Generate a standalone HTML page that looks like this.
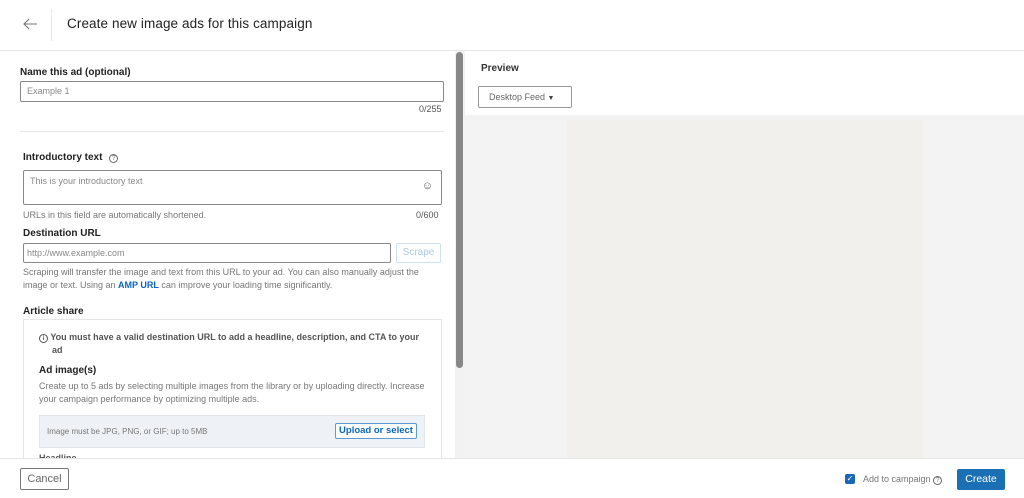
<!DOCTYPE html>
<html><head><style>
*{box-sizing:border-box;margin:0;padding:0}
body{width:1024px;height:498px;overflow:hidden;background:#fff;font-family:"Liberation Sans",sans-serif;color:#333;position:relative}
.hdr{position:absolute;left:0;top:0;width:1024px;height:51px;border-bottom:1px solid #e6e6e6;background:#fff}
.abs{position:absolute}
.lbl{font-size:10px;font-weight:bold;color:#222}
.inp{position:absolute;border:1px solid #888;border-radius:2px;background:#fff;font-size:9px;color:#888;padding-left:6px}
.sm{font-size:9px;color:#777}
</style></head><body>
<div class="hdr">
<svg class="abs" style="left:22px;top:17px" width="16" height="14" viewBox="0 0 16 14"><path d="M15 7H2M7 2L2 7l5 5" stroke="#777" stroke-width="1.1" fill="none"/></svg>
<div class="abs" style="left:51px;top:9px;width:1px;height:32px;background:#e6e6e6"></div>
<div class="abs" style="left:67px;top:16px;font-size:13.5px;color:#222;letter-spacing:0.1px">Create new image ads for this campaign</div>
</div>
<div class="abs lbl" style="left:20px;top:67px">Name this ad (optional)</div>
<div class="inp" style="left:20px;top:81px;width:424px;height:21px;line-height:19px">Example 1</div>
<div class="abs sm" style="left:419px;top:104px;color:#555">0/255</div>
<div class="abs" style="left:20px;top:131px;width:424px;height:1px;background:#e6e6e6"></div>
<div class="abs lbl" style="left:23px;top:152px">Introductory text <span style="font-weight:normal;color:#666;border:1px solid #666;border-radius:50%;display:inline-block;width:9px;height:9px;font-size:7px;text-align:center;line-height:8px;margin-left:4px">?</span></div>
<div class="inp" style="left:23px;top:170px;width:419px;height:35px;padding-top:5px">This is your introductory text
<span class="abs" style="right:8px;top:9px;font-size:11px;color:#555">☺</span></div>
<div class="abs sm" style="left:23px;top:210px">URLs in this field are automatically shortened.</div>
<div class="abs sm" style="left:416px;top:210px;color:#555">0/600</div>
<div class="abs lbl" style="left:23px;top:228px">Destination URL</div>
<div class="inp" style="left:23px;top:243px;width:368px;height:20px;line-height:18px;padding-left:3px">http://www.example.com</div>
<div class="abs" style="left:396px;top:243px;width:45px;height:20px;border:1px solid #cfe0ef;border-radius:2px;color:#a9cbe6;font-size:10px;text-align:center;line-height:18px">Scrape</div>
<div class="abs sm" style="left:23px;top:266px;line-height:13px;width:418px">Scraping will transfer the image and text from this URL to your ad. You can also manually adjust the image or text. Using an <b style="color:#0a66c2">AMP URL</b> can improve your loading time significantly.</div>
<div class="abs lbl" style="left:23px;top:306px">Article share</div>
<div class="abs" style="left:23px;top:319px;width:419px;height:150px;border:1px solid #e6e6e6;border-bottom:none"></div>
<div class="abs" style="left:39px;top:331px;font-size:9px;font-weight:bold;color:#555;line-height:13px;width:400px;white-space:nowrap"><span style="display:inline-block;width:9px;height:9px;border:1px solid #555;border-radius:50%;font-size:6px;text-align:center;line-height:8px;vertical-align:0">i</span> You must have a valid destination URL to add a headline, description, and CTA to your<br><span style="padding-left:13px">ad</span></div>
<div class="abs lbl" style="left:39px;top:365px">Ad image(s)</div>
<div class="abs sm" style="left:39px;top:380px;line-height:13px;width:400px">Create up to 5 ads by selecting multiple images from the library or by uploading directly. Increase your campaign performance by optimizing multiple ads.</div>
<div class="abs" style="left:39px;top:415px;width:386px;height:33px;background:#eef2f6;border:1px solid #e2e6ea"></div>
<div class="abs" style="left:47px;top:427px;font-size:8px;color:#777">Image must be JPG, PNG, or GIF; up to 5MB</div>
<div class="abs" style="left:335px;top:423px;width:82px;height:16px;border:1px solid #5a9bd5;border-radius:2px;color:#0a66c2;font-size:9.5px;font-weight:bold;text-align:center;line-height:14px;background:#fff">Upload or select</div>
<div class="abs" style="left:39px;top:453px;font-size:9px;font-weight:bold;color:#555">Headline</div>
<div class="abs" style="left:455px;top:51px;width:10px;height:407px;background:#f2f2f2"></div>
<div class="abs" style="left:456px;top:52px;width:7px;height:316px;background:#888;border-radius:4px"></div>
<div class="abs" style="left:465px;top:51px;width:559px;height:407px;background:#f3f3f3"></div>
<div class="abs" style="left:465px;top:51px;width:559px;height:64px;background:#fff"></div>
<div class="abs" style="left:481px;top:63px;font-size:10px;font-weight:bold;color:#333">Preview</div>
<div class="abs" style="left:478px;top:86px;width:94px;height:22px;border:1px solid #999;border-radius:2px;font-size:9px;color:#666;line-height:20px;padding-left:10px">Desktop Feed <span style="font-size:7px;color:#444">▼</span></div>
<div class="abs" style="left:567px;top:120px;width:356px;height:338px;background:#f1f0ed"></div>
<div class="abs" style="left:0;top:458px;width:1024px;height:40px;background:#fff;border-top:1px solid #e6e6e6"></div>
<div class="abs" style="left:20px;top:468px;width:49px;height:22px;border:1px solid #777;border-radius:2px;font-size:11px;color:#666;text-align:center;line-height:20px">Cancel</div>
<div class="abs" style="left:845px;top:474px;width:10px;height:10px;background:#1a66b8;border-radius:2px;color:#fff;font-size:8px;line-height:10px;text-align:center">✓</div>
<div class="abs" style="left:863px;top:474px;font-size:9px;color:#777">Add to campaign <span style="display:inline-block;width:9px;height:9px;border:1px solid #666;border-radius:50%;font-size:7px;text-align:center;line-height:8px">?</span></div>
<div class="abs" style="left:957px;top:469px;width:48px;height:21px;background:#1a6fb5;border-radius:2px;color:#fff;font-size:10.5px;text-align:center;line-height:21px">Create</div>
</body></html>
